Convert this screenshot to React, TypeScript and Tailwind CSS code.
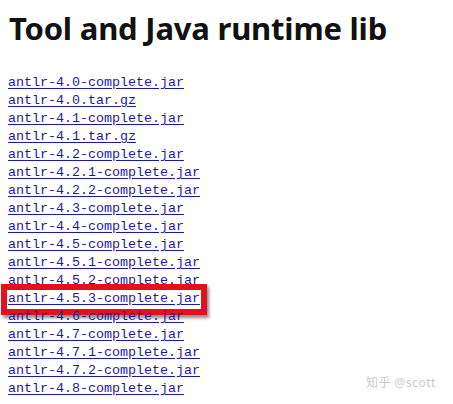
const files = [
  "antlr-4.0-complete.jar",
  "antlr-4.0.tar.gz",
  "antlr-4.1-complete.jar",
  "antlr-4.1.tar.gz",
  "antlr-4.2-complete.jar",
  "antlr-4.2.1-complete.jar",
  "antlr-4.2.2-complete.jar",
  "antlr-4.3-complete.jar",
  "antlr-4.4-complete.jar",
  "antlr-4.5-complete.jar",
  "antlr-4.5.1-complete.jar",
  "antlr-4.5.2-complete.jar",
  "antlr-4.5.3-complete.jar",
  "antlr-4.6-complete.jar",
  "antlr-4.7-complete.jar",
  "antlr-4.7.1-complete.jar",
  "antlr-4.7.2-complete.jar",
  "antlr-4.8-complete.jar",
];

const App = () => {
  return (
    <div className="relative w-[453px] h-[404px] overflow-hidden bg-white px-2">
      <h1 className="pt-[8px] pl-[1px] text-[31px] leading-[40px] font-bold text-[#111] font-['Noto_Sans',sans-serif] tracking-[-0.2px]">
        Tool and Java runtime lib
      </h1>

      <ul className="mt-[26px] flex flex-col font-['Liberation_Mono',monospace] text-[13.33px] leading-[18px]">
        {files.map((f) => (
          <li key={f} className="relative">
            <a className="text-[#1a1aa6] underline underline-offset-[2px] cursor-pointer">{f}</a>
            {f === "antlr-4.5.3-complete.jar" ? (
              <span className="absolute left-[-7px] top-[-6px] w-[206px] h-[31px] border-[6px] border-[#e3121a] shadow-[2px_3px_3px_rgba(0,0,0,0.45)]" />
            ) : null}
          </li>
        ))}
      </ul>

      <span className="absolute left-[366px] top-[374px] text-[12px] text-[#cacaca] tracking-[0.5px] font-['Noto_Sans','Noto_Sans_CJK_SC',sans-serif]">
        知乎 @scott
      </span>
    </div>
  );
};

export default App;
